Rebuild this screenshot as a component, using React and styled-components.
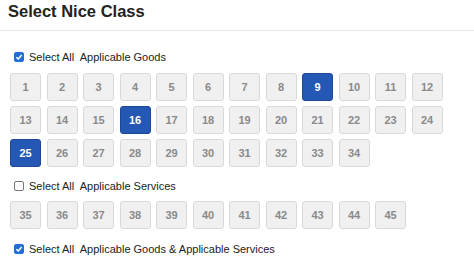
import React from 'react';
import styled, { createGlobalStyle } from 'styled-components';

const GlobalStyle = createGlobalStyle`
  body {
    margin: 0;
    background: #ffffff;
    font-family: "Liberation Sans", Arial, sans-serif;
  }
`;

const Page = styled.div`
  width: 474px;
  height: 266px;
  overflow: hidden;
  background: #fff;
`;

const Header = styled.div`
  height: 31px;
  border-bottom: 1px solid #e6e6e6;
  padding-left: 8px;
  box-sizing: border-box;
`;

const Title = styled.h2`
  margin: 0;
  padding-top: 1px;
  font-size: 16.5px;
  font-weight: 700;
  line-height: 20px;
  color: #222;
`;

const Body = styled.div`
  padding: 16px 0 0 10px;
`;

const CheckRow = styled.label`
  display: flex;
  align-items: center;
  height: 20px;
  padding-left: 4px;
  margin-bottom: ${(props) => props.gapBelow || '0'};
  font-size: 11px;
  color: #222;
  white-space: pre;
`;

const Box = styled.span`
  width: 10px;
  height: 10px;
  margin-right: 5px;
  border-radius: 2px;
  box-sizing: border-box;
  display: flex;
  align-items: center;
  justify-content: center;
  background: ${(props) => (props.checked ? '#1f6fd6' : '#fff')};
  border: 1px solid ${(props) => (props.checked ? '#1f6fd6' : '#767676')};
`;

const Grid = styled.div`
  display: grid;
  grid-template-columns: repeat(12, 31px);
  column-gap: 5.5px;
  row-gap: 5px;
  margin-bottom: ${(props) => props.gapBelow || '0'};
`;

const ClassButton = styled.div`
  height: 28px;
  box-sizing: border-box;
  border-radius: 3px;
  display: flex;
  align-items: center;
  justify-content: center;
  font-size: 11px;
  font-weight: 700;
  color: ${(props) => (props.active ? '#fff' : '#8a8a8a')};
  background: ${(props) => (props.active ? '#2557b4' : '#f0f0f0')};
  border: 1px solid ${(props) => (props.active ? '#1d4896' : '#d9d9d9')};
`;

const Check = ({ checked, label, gapBelow }) => (
  <CheckRow gapBelow={gapBelow}>
    <Box checked={checked}>
      {checked && (
        <svg width="8" height="8" viewBox="0 0 8 8">
          <path d="M1.3 4.2 L3.2 6 L6.7 1.9" fill="none" stroke="#fff" strokeWidth="1.5" />
        </svg>
      )}
    </Box>
    {label}
  </CheckRow>
);

const goods = Array.from({ length: 34 }, (_, i) => i + 1);
const services = Array.from({ length: 11 }, (_, i) => i + 35);
const selected = [9, 16, 25];

export default function App() {
  return (
    <Page>
      <GlobalStyle />
      <Header>
        <Title>Select Nice Class</Title>
      </Header>
      <Body>
        <Check checked label="Select All  Applicable Goods" gapBelow="6px" />
        <Grid gapBelow="9px">
          {goods.map((n) => (
            <ClassButton key={n} active={selected.includes(n)}>
              {n}
            </ClassButton>
          ))}
        </Grid>
        <Check label="Select All  Applicable Services" gapBelow="5px" />
        <Grid gapBelow="10px">
          {services.map((n) => (
            <ClassButton key={n}>{n}</ClassButton>
          ))}
        </Grid>
        <Check checked label="Select All  Applicable Goods & Applicable Services" />
      </Body>
    </Page>
  );
}
